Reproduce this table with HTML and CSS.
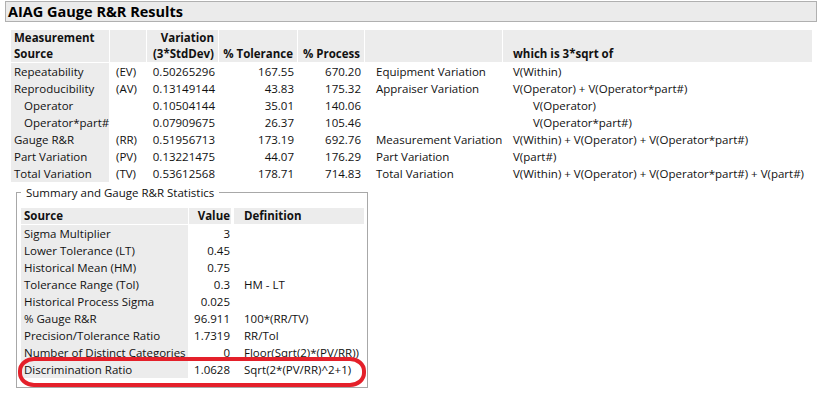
FILE: index.html
```html
<!DOCTYPE html>
<html>
<head>
<meta charset="utf-8">
<link rel="stylesheet" href="styles.css">
</head>
<body>
<div class="title">AIAG Gauge R&amp;R Results</div>
<table class="main">
  <colgroup>
    <col class="c-lbl"><col class="c-abbr"><col class="c-var"><col class="c-tol"><col class="c-proc"><col class="c-desc"><col class="c-which">
  </colgroup>
  <thead>
    <tr>
      <th class="left">Measurement<br>Source</th>
      <th></th>
      <th class="right">Variation<br>(3*StdDev)</th>
      <th class="right">% Tolerance</th>
      <th class="right">% Process</th>
      <th></th>
      <th class="left which last">which is 3*sqrt of</th>
    </tr>
  </thead>
  <tbody>
    <tr><td class="lbl">Repeatability</td><td class="abbr">(EV)</td><td class="num">0.50265296</td><td class="num">167.55</td><td class="num">670.20</td><td class="desc">Equipment Variation</td><td class="which">V(Within)</td></tr>
    <tr><td class="lbl">Reproducibility</td><td class="abbr">(AV)</td><td class="num">0.13149144</td><td class="num">43.83</td><td class="num">175.32</td><td class="desc">Appraiser Variation</td><td class="which">V(Operator) + V(Operator*part#)</td></tr>
    <tr><td class="lbl sub">Operator</td><td class="abbr"></td><td class="num">0.10504144</td><td class="num">35.01</td><td class="num">140.06</td><td class="desc"></td><td class="which sub">V(Operator)</td></tr>
    <tr><td class="lbl sub">Operator*part#</td><td class="abbr"></td><td class="num">0.07909675</td><td class="num">26.37</td><td class="num">105.46</td><td class="desc"></td><td class="which sub">V(Operator*part#)</td></tr>
    <tr><td class="lbl">Gauge R&amp;R</td><td class="abbr">(RR)</td><td class="num">0.51956713</td><td class="num">173.19</td><td class="num">692.76</td><td class="desc">Measurement Variation</td><td class="which">V(Within) + V(Operator) + V(Operator*part#)</td></tr>
    <tr><td class="lbl">Part Variation</td><td class="abbr">(PV)</td><td class="num">0.13221475</td><td class="num">44.07</td><td class="num">176.29</td><td class="desc">Part Variation</td><td class="which">V(part#)</td></tr>
    <tr><td class="lbl">Total Variation</td><td class="abbr">(TV)</td><td class="num">0.53612568</td><td class="num">178.71</td><td class="num">714.83</td><td class="desc">Total Variation</td><td class="which">V(Within) + V(Operator) + V(Operator*part#) + V(part#)</td></tr>
  </tbody>
</table>
<fieldset class="summary">
  <legend>Summary and Gauge R&amp;R Statistics</legend>
  <div class="stats-wrap">
    <table class="stats">
      <colgroup><col class="s-src"><col class="s-val"><col class="s-def"></colgroup>
      <thead>
        <tr><th class="left">Source</th><th class="right val">Value</th><th class="left def last">Definition</th></tr>
      </thead>
      <tbody>
        <tr><td class="lbl">Sigma Multiplier</td><td class="val">3</td><td class="def"></td></tr>
        <tr><td class="lbl">Lower Tolerance (LT)</td><td class="val">0.45</td><td class="def"></td></tr>
        <tr><td class="lbl">Historical Mean (HM)</td><td class="val">0.75</td><td class="def"></td></tr>
        <tr><td class="lbl">Tolerance Range (Tol)</td><td class="val">0.3</td><td class="def">HM - LT</td></tr>
        <tr><td class="lbl">Historical Process Sigma</td><td class="val">0.025</td><td class="def"></td></tr>
        <tr><td class="lbl">% Gauge R&amp;R</td><td class="val">96.911</td><td class="def">100*(RR/TV)</td></tr>
        <tr><td class="lbl">Precision/Tolerance Ratio</td><td class="val">1.7319</td><td class="def">RR/Tol</td></tr>
        <tr><td class="lbl">Number of Distinct Categories</td><td class="val">0</td><td class="def">Floor(Sqrt(2)*(PV/RR))</td></tr>
        <tr><td class="lbl">Discrimination Ratio</td><td class="val">1.0628</td><td class="def">Sqrt(2*(PV/RR)^2+1)</td></tr>
      </tbody>
    </table>
    <div class="highlight"></div>
  </div>
</fieldset>
</body>
</html>
```
FILE: styles.css
```css
html, body {
  margin: 0;
  padding: 0;
  background: #ffffff;
}
body {
  width: 820px;
  height: 394px;
  overflow: hidden;
  font-family: "Open Sans", "Noto Sans", sans-serif;
  font-size: 11.5px;
  color: #111111;
}
.title {
  box-sizing: border-box;
  margin: 1px 0 0 5px;
  width: 812px;
  height: 21px;
  border: 1px solid #b0b0b0;
  background: #ebebeb;
  padding-left: 2px;
  font-weight: bold;
  font-size: 14.5px;
  line-height: 19px;
  color: #000;
}
table {
  border-collapse: separate;
  border-spacing: 0;
  table-layout: fixed;
}
th {
  background: #ececec;
  font-weight: bold;
  white-space: nowrap;
  vertical-align: bottom;
}
td {
  white-space: nowrap;
  height: 17px;
  line-height: 17px;
  padding: 0 4px;
}
.left { text-align: left; }
.right { text-align: right; }

/* main table */
.main {
  margin: 8px 0 0 11px;
  width: 801px;
}
.c-lbl { width: 99px; }
.c-abbr { width: 37px; }
.c-var { width: 72px; }
.c-tol { width: 79px; }
.c-proc { width: 67px; }
.c-desc { width: 138px; }
.c-which { width: 309px; }
.main th {
  line-height: 16px;
  padding: 0 4px 0 3px;
  border-right: 1px solid #fff;
  border-bottom: 1px solid #fff;
}
.main th.last { border-right: none; }
.main th.which { padding-left: 10px; }
.main td.lbl {
  background: #ececec;
  padding-left: 3px;
  border-right: 1px solid #fff;
}
.main td.lbl.sub { padding-left: 13px; }
.main td.abbr { padding-left: 6px; }
.main td.num { text-align: right; }
.main td.desc { padding-left: 11px; }
.main td.which { padding-left: 10px; overflow: visible; }
.main td.which.sub { padding-left: 30px; }

/* summary frame */
.summary {
  box-sizing: border-box;
  position: relative;
  margin: 3px 0 0 16px;
  width: 352px;
  min-width: 0;
  border: 1px solid #a8a8a8;
  padding: 8px 3px 9px 4px;
}
.summary legend {
  padding: 0 5px;
  margin: 0;
  line-height: 15px;
  font-weight: normal;
}
.stats-wrap {
  position: relative;
}
.stats {
  width: 343px;
}
.s-src { width: 168px; }
.s-val { width: 45px; }
.s-def { width: 130px; }
.stats th {
  height: 16px;
  line-height: 16px;
  padding: 0 0 0 3px;
  border-right: 1px solid #fff;
  border-bottom: 1px solid #fff;
}
.stats th.val {
  padding: 0 1px 0 0;
  border-right: 3px solid #fff;
}
.stats th.def {
  padding-left: 10px;
  border-right: none;
}
.stats td.lbl {
  background: #ececec;
  padding-left: 3px;
  border-right: 1px solid #fff;
}
.stats td.val {
  text-align: right;
  padding: 0 1px 0 0;
  border-right: 3px solid #fff;
}
.stats td.def {
  padding-left: 10px;
}
.highlight {
  position: absolute;
  box-sizing: border-box;
  left: -3px;
  top: 149px;
  width: 348px;
  height: 30px;
  border: 4px solid #e4202a;
  border-radius: 16px / 14px;
}
```
